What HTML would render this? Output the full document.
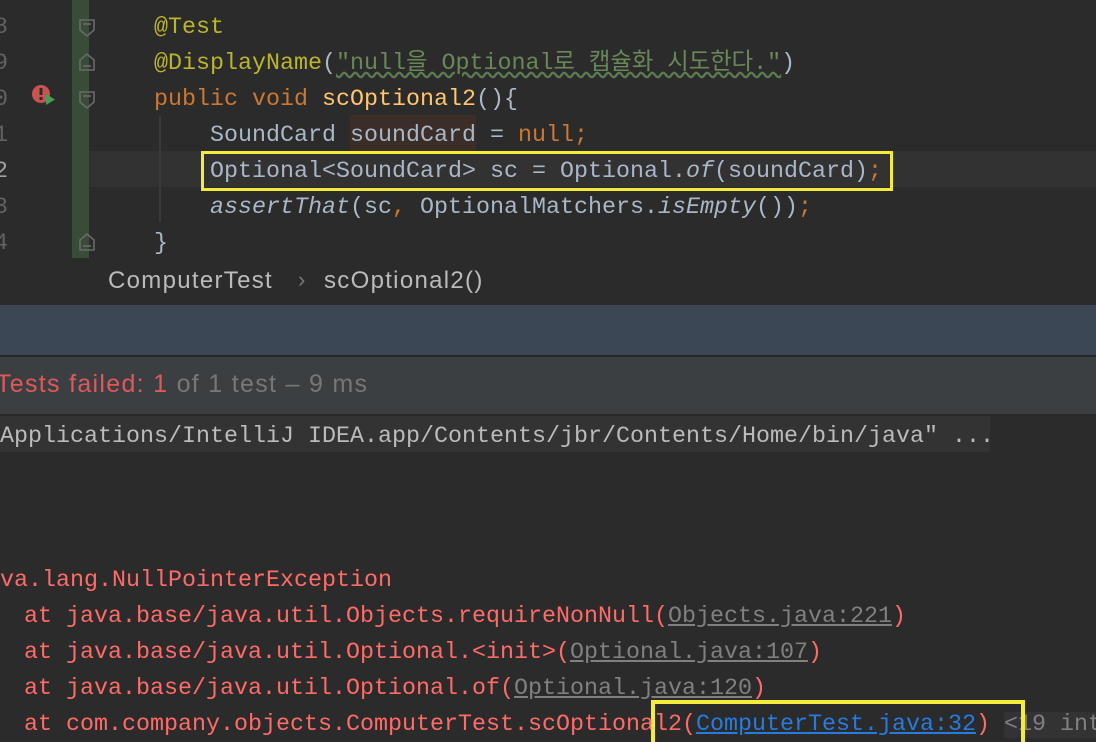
<!DOCTYPE html>
<html><head><style>
html,body{margin:0;width:1096px;height:742px;overflow:hidden;}
body{background:#2b2b2b;position:relative;font-family:"Liberation Mono",monospace;}
.m{position:absolute;font-family:"Liberation Mono","Noto Sans CJK KR",monospace;font-size:23.33px;white-space:pre;line-height:36px;}
.s{position:absolute;font-family:"Liberation Sans",sans-serif;white-space:pre;}
.ln{color:#606366;}
</style></head><body>
<div style="position:absolute;left:72px;top:0;width:17px;height:258px;background:#384c38"></div>
<div style="position:absolute;left:89px;top:151px;width:1007px;height:36px;background:#323232"></div>
<div style="position:absolute;left:350px;top:115px;width:126px;height:36px;background:#3b2e28"></div>
<div style="position:absolute;left:159px;top:115px;width:2px;height:107px;background:#393939"></div>
<div class="m ln" style="left:-6px;top:10px">8
9
0
1
<span style="color:#a4a3a3">2</span>
3
4</div>
<svg style="position:absolute;left:78px;top:14px" width="22" height="240" fill="none" stroke="#6a6a6a" stroke-width="1.6">
<path d="M2 6h14v10l-7 6l-7-6z"/><path d="M5 10h8"/>
<path d="M2 56h14v-10l-7-6l-7 6z"/><path d="M5 52h8"/>
<path d="M2 78h14v10l-7 6l-7-6z"/><path d="M5 82h8"/>
<path d="M2 236h14v-10l-7-6l-7 6z"/><path d="M5 232h8"/>
</svg>
<svg style="position:absolute;left:31px;top:84px" width="26" height="26"><circle cx="10" cy="10" r="9" fill="#c75450"/><rect x="8.5" y="4" width="3" height="7" fill="#2b2b2b"/><rect x="8.5" y="13" width="3" height="3" fill="#2b2b2b"/><path d="M15 10l9 5.5l-9 5.5z" fill="#499c54"/></svg>
<div class="m" style="left:154px;top:10px;color:#a9b7c6"><span style="color:#bbb529">@Test</span>
<span style="color:#bbb529">@DisplayName</span>(<span style="color:#6a8759;text-decoration:underline wavy #5a7a50">"null을 Optional로 캡슐화 시도한다."</span>)
<span style="color:#cc7832">public void </span><span style="color:#ffc66d">scOptional2</span>(){
    SoundCard soundCard = <span style="color:#cc7832">null;</span>
    Optional&lt;SoundCard&gt; sc = Optional.<i>of</i>(soundCard)<span style="color:#cc7832">;</span>
    <i>assertThat</i>(sc<span style="color:#cc7832">, </span>OptionalMatchers.<i>isEmpty</i>())<span style="color:#cc7832">;</span>
}</div>
<div style="position:absolute;left:201px;top:151px;width:686px;height:34px;border:3px solid #f5eb3a"></div>
<div style="position:absolute;left:0;top:258px;width:1096px;height:47px;background:#2b2b2b"></div>
<div class="s" style="left:108px;top:267px;font-size:24px;letter-spacing:1.3px;color:#bbbbbb">ComputerTest</div>
<div class="s" style="left:298px;top:267px;font-size:22px;color:#777">›</div>
<div class="s" style="left:324px;top:267px;font-size:24px;letter-spacing:1.3px;color:#bbbbbb">scOptional2()</div>
<div style="position:absolute;left:0;top:305px;width:1096px;height:50px;background:#3b4754"></div>
<div style="position:absolute;left:0;top:355px;width:1096px;height:2px;background:#282828"></div>
<div style="position:absolute;left:0;top:357px;width:1096px;height:57px;background:#3c3f41"></div>
<div class="s" style="left:-4px;top:370px;font-size:25px;letter-spacing:1.3px;color:#777"><span style="color:#e0585b">Tests failed: 1</span> of 1 test – 9 ms</div>
<div style="position:absolute;left:0;top:414px;width:1096px;height:2px;background:#282828"></div>
<div style="position:absolute;left:0;top:416px;width:990px;height:36px;background:#333333"></div>
<div class="m" style="left:0;top:419px;color:#bbbbbb">Applications/IntelliJ IDEA.app/Contents/jbr/Contents/Home/bin/java" ...</div>
<div class="m" style="left:0;top:563px;color:#ff6b68">va.lang.NullPointerException</div>
<div class="m" style="left:-4px;top:599px;color:#ff6b68">  at java.base/java.util.Objects.requireNonNull(<u style="color:#808080">Objects.java:221</u>)
  at java.base/java.util.Optional.&lt;init&gt;(<u style="color:#808080">Optional.java:107</u>)
  at java.base/java.util.Optional.of(<u style="color:#808080">Optional.java:120</u>)
  at com.company.objects.ComputerTest.scOptional2(<u style="color:#287bde">ComputerTest.java:32</u>) <span style="color:#808080;background:#333">&lt;19 int</span></div>
<div style="position:absolute;left:651px;top:700px;width:366px;height:40px;border:4px solid #f5eb3a;border-bottom:none"></div>
</body></html>
